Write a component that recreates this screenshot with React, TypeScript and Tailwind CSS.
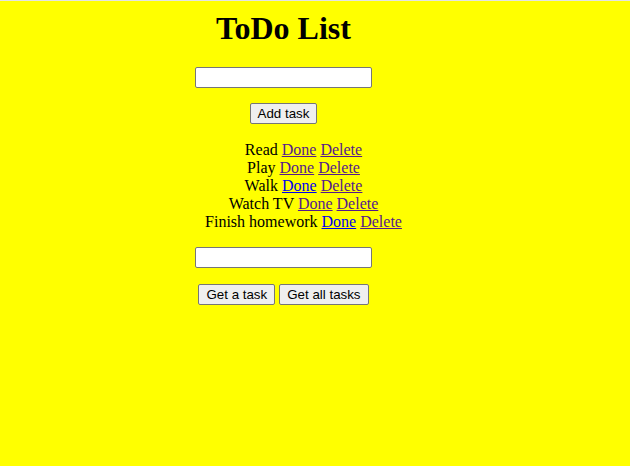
import React from 'react';

type Task = { name: string; doneVisited: boolean };

const TASKS: Task[] = [
  { name: 'Read', doneVisited: true },
  { name: 'Play', doneVisited: true },
  { name: 'Walk', doneVisited: false },
  { name: 'Watch TV', doneVisited: true },
  { name: 'Finish homework', doneVisited: false },
];

const serif = { fontFamily: '"Liberation Serif", "Times New Roman", serif' };

function NativeButton({ label }: { label: string }) {
  return (
    <button
      type="button"
      className="h-[21px] px-[7px] border border-[#767676] rounded-[2px] bg-[#efefef] text-[13.33px] leading-[15px] text-black font-['Liberation_Sans',Arial,sans-serif]"
    >
      {label}
    </button>
  );
}

function TextBox() {
  return (
    <input
      type="text"
      className="w-[177px] h-[21px] px-[2px] border border-[#767676] rounded-[2px] bg-white text-[13.33px] font-['Liberation_Sans',Arial,sans-serif]"
    />
  );
}

export default function App() {
  return (
    <div className="min-h-screen w-full bg-[#ffff00] border-t border-[#e4e4e4] text-black text-[16px]" style={serif}>
      <div className="w-[567px] flex flex-col items-center">
        <h1 className="mt-[9px] text-[32px] leading-[37px] font-bold">ToDo List</h1>

        <div className="mt-[20px] flex">
          <TextBox />
        </div>

        <div className="mt-[15px] flex">
          <NativeButton label="Add task" />
        </div>

        <ul className="mt-[17px] self-stretch pl-[40px] list-none text-center">
          {TASKS.map(task => (
            <li key={task.name} className="leading-[18px]">
              {task.name}{' '}
              <a href="#" className={`underline ${task.doneVisited ? 'text-[#551a8b]' : 'text-[#0000ee]'}`}>
                Done
              </a>{' '}
              <a href="#" className="underline text-[#551a8b]">
                Delete
              </a>
            </li>
          ))}
        </ul>

        <div className="mt-[16px] flex">
          <TextBox />
        </div>

        <div className="mt-[16px] flex gap-[4px]">
          <NativeButton label="Get a task" />
          <NativeButton label="Get all tasks" />
        </div>
      </div>
    </div>
  );
}
